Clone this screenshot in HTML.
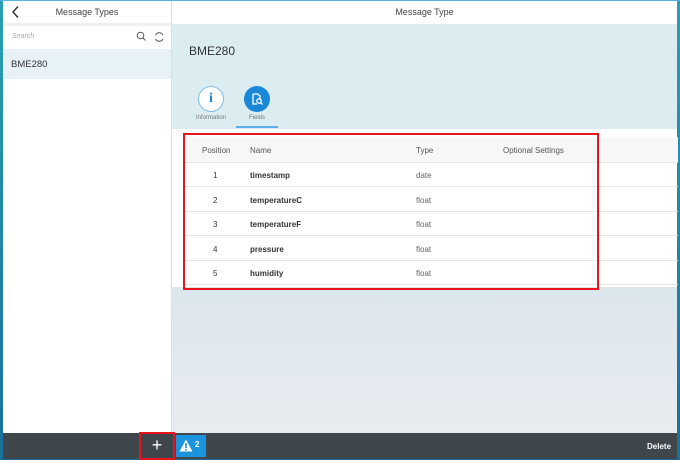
<!DOCTYPE html>
<html><head><style>
*{margin:0;padding:0;box-sizing:border-box}
body{width:680px;height:460px;overflow:hidden;background:linear-gradient(#2a9fb0,#1a6f9a);font-family:"Liberation Sans",sans-serif;position:relative}
.abs{position:absolute}
.row{position:absolute;left:184px;width:494px;height:24px;border-bottom:1px solid #e5e5e5;font-size:8px;color:#333}
.row span{position:absolute;top:8px}
</style></head><body>
<div class="abs" style="left:0;top:0;width:680px;height:1px;background:#5aaee8"></div>
<div class="abs" style="left:3px;top:1px;width:168px;height:432px;background:#fff"></div>
<div class="abs" style="left:171px;top:1px;width:1px;height:432px;background:#d8dde0"></div>
<div class="abs" style="left:3px;top:23px;width:168px;height:3px;background:#f0f0f0"></div>
<svg class="abs" style="left:11px;top:5px" width="10" height="14"><path d="M7 1.5L2 7l5 5.5" fill="none" stroke="#333" stroke-width="1.5"/></svg>
<div class="abs" style="left:3px;top:7px;width:168px;text-align:center;font-size:9px;color:#444">Message Types</div>
<div class="abs" style="left:12px;top:33px;font-size:7px;color:#aaa;font-style:italic">Search</div>
<svg class="abs" style="left:136px;top:31px" width="30" height="12"><circle cx="4.5" cy="4.5" r="3.3" fill="none" stroke="#555" stroke-width="1"/><line x1="7" y1="7" x2="9.5" y2="9.5" stroke="#555"/><path d="M27 4A4.2 4.2 0 0 0 19.5 4M19.5 8A4.2 4.2 0 0 0 27 8" fill="none" stroke="#555"/></svg>
<div class="abs" style="left:3px;top:49px;width:168px;height:30px;background:#e6f1f8"></div>
<div class="abs" style="left:11px;top:59px;font-size:9.5px;color:#333">BME280</div>
<div class="abs" style="left:172px;top:1px;width:505px;height:23px;background:#fff"></div>
<div class="abs" style="left:172px;top:7px;width:505px;text-align:center;font-size:9px;color:#444">Message Type</div>
<div class="abs" style="left:172px;top:24px;width:505px;height:105px;background:#dcedf1"></div>
<div class="abs" style="left:189px;top:44px;font-size:12px;color:#333">BME280</div>
<div class="abs" style="left:198px;top:86px;width:26px;height:26px;border-radius:50%;background:#fff;border:1px solid #7fbce8;color:#1a88d8;text-align:center;font:bold 14px 'Liberation Serif',serif;line-height:24px">i</div>
<div class="abs" style="left:244px;top:86px;width:26px;height:26px;border-radius:50%;background:#1a88d8"></div>
<svg class="abs" style="left:250px;top:92px" width="14" height="14"><path d="M3 2h5l2 2v3M3 2v10h4" fill="none" stroke="#fff" stroke-width="1.3"/><circle cx="9" cy="9" r="2.2" fill="none" stroke="#fff" stroke-width="1.3"/><line x1="10.6" y1="10.6" x2="12.5" y2="12.5" stroke="#fff" stroke-width="1.3"/></svg>
<div class="abs" style="left:190px;top:115px;width:42px;text-align:center;font-size:6px;color:#777">Information</div>
<div class="abs" style="left:236px;top:115px;width:42px;text-align:center;font-size:6px;color:#777">Fields</div>
<div class="abs" style="left:236px;top:126px;width:42px;height:2px;background:#5aaee8"></div>
<div class="abs" style="left:172px;top:129px;width:505px;height:158px;background:#fff"></div>
<div class="abs" style="left:172px;top:287px;width:505px;height:146px;background:linear-gradient(#dce6ed,#e8ecf1)"></div>
<div class="abs" style="left:184px;top:137px;width:494px;height:26px;background:#f7f7f7;border-bottom:1px solid #e5e5e5;font-size:8px;color:#555">
<span class="abs" style="left:18px;top:9px">Position</span><span class="abs" style="left:66px;top:9px">Name</span><span class="abs" style="left:232px;top:9px">Type</span><span class="abs" style="left:319px;top:9px">Optional Settings</span></div>
<div class="row" style="top:163px"><span style="left:29px">1</span><b><span style="left:66px">timestamp</span></b><span style="left:232px;color:#666">date</span></div>
<div class="row" style="top:188px"><span style="left:29px">2</span><b><span style="left:66px">temperatureC</span></b><span style="left:232px;color:#666">float</span></div>
<div class="row" style="top:212px"><span style="left:29px">3</span><b><span style="left:66px">temperatureF</span></b><span style="left:232px;color:#666">float</span></div>
<div class="row" style="top:237px"><span style="left:29px">4</span><b><span style="left:66px">pressure</span></b><span style="left:232px;color:#666">float</span></div>
<div class="row" style="top:261px"><span style="left:29px">5</span><b><span style="left:66px">humidity</span></b><span style="left:232px;color:#666">float</span></div>
<div class="abs" style="left:183px;top:133px;width:416px;height:157px;border:2px solid #e8141e"></div>
<div class="abs" style="left:3px;top:433px;width:674px;height:26px;background:#3f464c"></div>
<div class="abs" style="left:139px;top:432px;width:36px;height:28px;border:2px solid #e8141e;color:#fff;text-align:center;font-size:18px;line-height:23px">+</div>
<div class="abs" style="left:176px;top:435px;width:30px;height:22px;background:#1a94dc"></div>
<svg class="abs" style="left:179px;top:439px" width="14" height="13"><path d="M7 0.5L13.5 12.5H0.5Z" fill="#fff"/><rect x="6.2" y="4" width="1.6" height="5" fill="#1a94dc"/><rect x="6.2" y="10" width="1.6" height="1.5" fill="#1a94dc"/></svg>
<div class="abs" style="left:195px;top:440px;font-size:8px;font-weight:bold;color:#fff">2</div>
<div class="abs" style="left:647px;top:442px;font-size:8px;font-weight:bold;color:#fff">Delete</div>
</body></html>
